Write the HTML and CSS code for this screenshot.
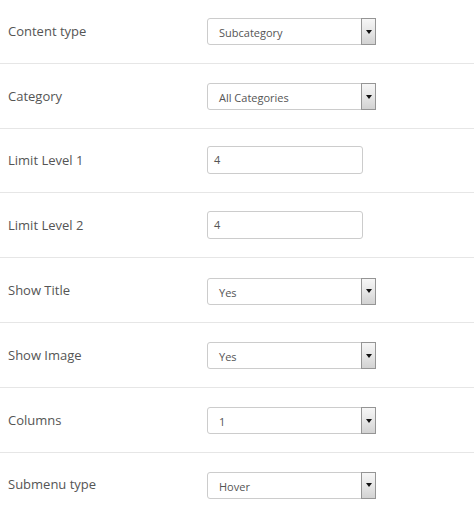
FILE: index.html
```html
<!DOCTYPE html>
<html>
<head>
<meta charset="utf-8">
<link rel="stylesheet" href="styles.css">
</head>
<body>
<div class="form">
  <div class="row">
    <div class="label">Content type</div>
    <div class="select"><span class="value">Subcategory</span><span class="btn"><span class="tri"></span></span></div>
  </div>
  <div class="row">
    <div class="label">Category</div>
    <div class="select"><span class="value">All Categories</span><span class="btn"><span class="tri"></span></span></div>
  </div>
  <div class="row">
    <div class="label">Limit Level 1</div>
    <div class="input">4</div>
  </div>
  <div class="row">
    <div class="label">Limit Level 2</div>
    <div class="input">4</div>
  </div>
  <div class="row">
    <div class="label">Show Title</div>
    <div class="select"><span class="value">Yes</span><span class="btn"><span class="tri"></span></span></div>
  </div>
  <div class="row">
    <div class="label">Show Image</div>
    <div class="select"><span class="value">Yes</span><span class="btn"><span class="tri"></span></span></div>
  </div>
  <div class="row">
    <div class="label">Columns</div>
    <div class="select"><span class="value">1</span><span class="btn"><span class="tri"></span></span></div>
  </div>
  <div class="row last">
    <div class="label">Submenu type</div>
    <div class="select"><span class="value">Hover</span><span class="btn"><span class="tri"></span></span></div>
  </div>
</div>
</body>
</html>
```
FILE: styles.css
```css
html, body {
  margin: 0;
  padding: 0;
  background: #ffffff;
}
body {
  font-family: "Open Sans", "Liberation Sans", sans-serif;
  color: #555555;
  width: 474px;
  height: 508px;
  overflow: hidden;
}
.form {
  margin-top: -1px;
}
.row {
  display: flex;
  align-items: center;
  height: 63.8px;
  border-bottom: 1px solid #e6e6e6;
}
.row.last {
  border-bottom: none;
}
.label {
  width: 199px;
  padding-left: 8px;
  font-size: 13px;
  color: #555555;
}
.select {
  position: relative;
  display: flex;
  align-items: center;
  box-sizing: border-box;
  width: 169px;
  height: 27px;
  margin-top: 2px;
  border: 1px solid #cccccc;
  border-radius: 3px;
  background: #ffffff;
}
.value {
  flex: 1;
  padding-left: 11px;
  padding-top: 2px;
  font-size: 11px;
  color: #555555;
}
.btn {
  position: absolute;
  right: -1px;
  top: -1px;
  bottom: -1px;
  width: 15px;
  box-sizing: border-box;
  border: 1px solid #959595;
  background: linear-gradient(#f6f6f6, #e6e6e6 50%, #d2d2d2);
  display: flex;
  align-items: center;
  justify-content: center;
}
.tri {
  width: 0;
  height: 0;
  border-left: 3.5px solid transparent;
  border-right: 3.5px solid transparent;
  border-top: 4px solid #111111;
}
.input {
  box-sizing: border-box;
  width: 156px;
  height: 28px;
  border: 1px solid #cccccc;
  border-radius: 3px;
  padding-left: 6px;
  font-size: 11px;
  line-height: 26px;
  color: #555555;
}
```
